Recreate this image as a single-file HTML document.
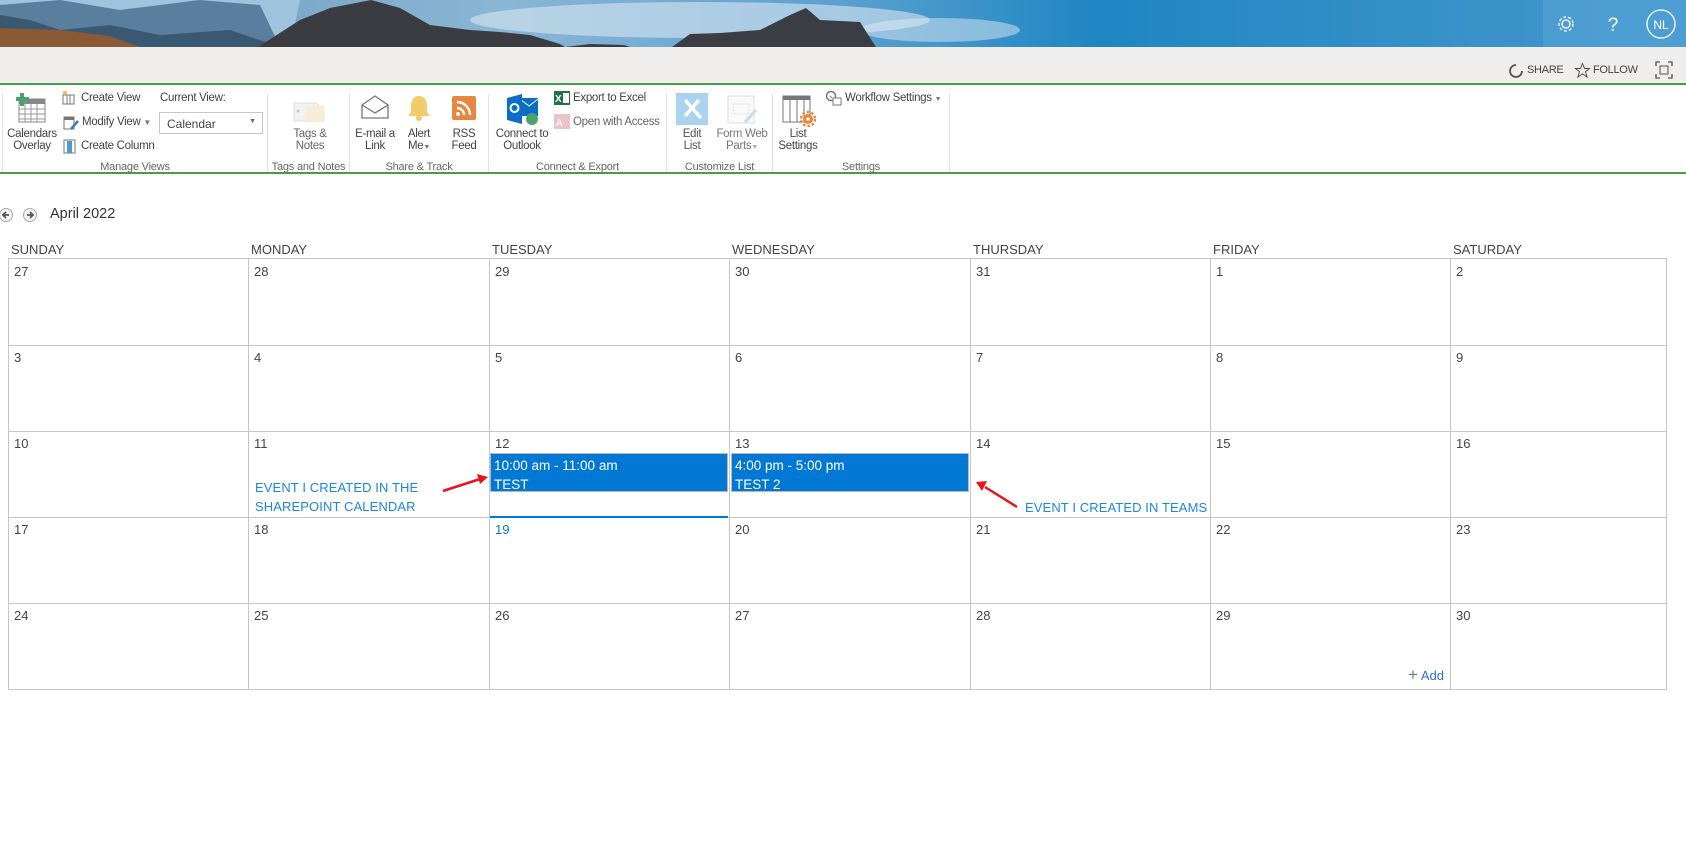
<!DOCTYPE html>
<html><head><meta charset="utf-8"><style>
*{margin:0;padding:0;box-sizing:border-box}
body{width:1686px;height:854px;background:#fff;font-family:"Liberation Sans",sans-serif;position:relative;overflow:hidden;color:#444}
.a{position:absolute;white-space:nowrap}
.rt{font-size:11.5px;color:#444;text-align:center;line-height:12px;letter-spacing:-0.3px}
.gl{font-size:11px;color:#666;text-align:center;letter-spacing:-0.2px}
.sm{font-size:11.5px;letter-spacing:-0.3px}
.sep{position:absolute;top:94px;width:1px;height:78px;background:#e1e1e1}
.vl{position:absolute;top:258px;width:1px;height:432px;background:#c6c6c6}
.hl{position:absolute;left:8px;width:1659px;height:1px;background:#c6c6c6}
.dh{position:absolute;top:242px;font-size:13px;color:#444}
.dn{position:absolute;font-size:13px;color:#444}
.ev{position:absolute;top:453px;height:39px;background:#0078d4;border:1px solid #b8b8b8;color:#fff;font-size:13.5px;padding:2px 0 0 3px;line-height:19px}
.an{position:absolute;font-size:13px;color:#1a86e8;letter-spacing:0.1px}
</style></head><body>
<svg class="a" style="left:0;top:0" width="1686" height="47" viewBox="0 0 1686 47">
<defs><linearGradient id="sky" x1="0" x2="1" y1="0" y2="0">
<stop offset="0" stop-color="#6c97b8"/><stop offset="0.3" stop-color="#8ab6d6"/><stop offset="0.5" stop-color="#5aa0d0"/><stop offset="0.65" stop-color="#1f86c3"/><stop offset="0.9" stop-color="#3c93c9"/><stop offset="1" stop-color="#4a9ad0"/></linearGradient></defs>
<rect width="1686" height="47" fill="url(#sky)"/>
<ellipse cx="700" cy="20" rx="230" ry="18" fill="#d8e6f0" opacity="0.6"/>
<ellipse cx="940" cy="30" rx="80" ry="12" fill="#dde9f2" opacity="0.5"/>
<polygon points="0,0 300,0 290,47 0,47" fill="#9fc3dc"/>
<polygon points="0,5 60,0 120,10 200,0 260,5 280,47 0,47" fill="#5a7f9e"/>
<polygon points="0,15 30,20 60,30 110,25 160,35 230,30 280,47 0,47" fill="#3b5873"/>
<polygon points="0,28 60,30 110,36 140,47 0,47" fill="#8a5a35"/>
<polygon points="258,47 300,20 330,8 371,0 400,8 430,25 470,30 500,32 530,35 560,44 565,47" fill="#3a3c42"/>
<polygon points="565,47 590,44 624,45 630,47" fill="#3a3c42"/>
<polygon points="672,47 690,34 720,33 760,30 790,15 806,8 820,20 860,22 876,47" fill="#3b3d44"/>
<rect x="1543" y="0" width="143" height="47" fill="#4f9fd4" opacity="0.85"/>
<g fill="none" stroke="#fff" stroke-width="1.3">
<circle cx="1566" cy="24" r="4"/><circle cx="1566" cy="24" r="7" stroke-dasharray="3 2"/>
<circle cx="1661" cy="24" r="14"/></g>
<text x="1613" y="31" fill="#fff" font-size="19" text-anchor="middle" font-family="Liberation Sans">?</text>
<text x="1661" y="29" fill="#fff" font-size="12" text-anchor="middle" font-family="Liberation Sans">NL</text>
</svg>
<div class="a" style="left:0;top:47px;width:1686px;height:37px;background:#efeeed"></div>
<svg class="a" style="left:1508px;top:63px" width="16" height="16"><path d="M8 2a6 6 0 1 0 6 6" fill="none" stroke="#555" stroke-width="1.8"/></svg>
<div class="a" style="left:1527px;top:64px;font-size:11px;color:#444;letter-spacing:-0.3px">SHARE</div>
<svg class="a" style="left:1574px;top:62px" width="17" height="17"><path d="M8.5 1.5l2 5h5l-4 3.2 1.6 5.3-4.6-3.2-4.6 3.2 1.6-5.3-4-3.2h5z" fill="none" stroke="#555" stroke-width="1"/></svg>
<div class="a" style="left:1593px;top:64px;font-size:11px;color:#444;letter-spacing:-0.3px">FOLLOW</div>
<svg class="a" style="left:1655px;top:61px" width="18" height="18"><path d="M1 5V1h4M13 1h4v4M17 13v4h-4M5 17H1v-4" fill="none" stroke="#555" stroke-width="1.3"/><rect x="5" y="5" width="8" height="8" fill="none" stroke="#555"/></svg>
<div class="a" style="left:0;top:83px;width:1686px;height:2px;background:#4a9a4a"></div>
<div class="a" style="left:0;top:172px;width:1686px;height:2px;background:#4a9a4a"></div>
<div class="sep" style="left:2px"></div>
<div class="sep" style="left:267px"></div><div class="sep" style="left:349px"></div><div class="sep" style="left:488px"></div><div class="sep" style="left:666px"></div><div class="sep" style="left:772px"></div><div class="sep" style="left:949px"></div>
<svg class="a" style="left:14px;top:93px" width="32" height="30"><rect x="5" y="6" width="26" height="23" fill="#fff" stroke="#888"/><rect x="5" y="6" width="26" height="5" fill="#888"/><g stroke="#999"><path d="M5 16h26M5 21h26M5 26h26M11 11v18M17 11v18M23 11v18"/></g><path d="M8 0v13M2 6h13" stroke="#4aa36a" stroke-width="4"/></svg>
<div class="a rt" style="left:4px;top:128px;width:56px">Calendars<br>Overlay</div>
<svg class="a" style="left:62px;top:91px" width="14" height="14"><rect x="1" y="4" width="11" height="9" fill="#fff" stroke="#777"/><path d="M5 4v9M8 4v9" stroke="#777"/><circle cx="3" cy="2" r="2" fill="#f5b942"/></svg>
<div class="a sm" style="left:81px;top:92px">Create View</div>
<svg class="a" style="left:63px;top:115px" width="16" height="16"><rect x="1" y="2" width="10" height="12" fill="#fff" stroke="#777"/><rect x="1" y="2" width="10" height="3" fill="#777"/><path d="M8 14l7-8" stroke="#3a7cc4" stroke-width="2.5"/></svg>
<div class="a sm" style="left:82px;top:116px">Modify View <span style="font-size:8px;color:#777">▼</span></div>
<svg class="a" style="left:63px;top:138px" width="14" height="16"><rect x="1" y="2" width="11" height="13" fill="#fff" stroke="#777"/><rect x="4" y="3" width="5" height="12" fill="#4a9ad6"/></svg>
<div class="a sm" style="left:81px;top:140px">Create Column</div>
<div class="a sm" style="left:160px;top:92px">Current View:</div>
<div class="a" style="left:159px;top:112px;width:104px;height:22px;border:1px solid #c8c8c8;font-size:12px;padding:4px 0 0 7px">Calendar<span style="position:absolute;right:6px;top:5px;font-size:7px;color:#666">▼</span></div>
<div class="a gl" style="left:60px;top:161px;width:150px">Manage Views</div>
<svg class="a" style="left:292px;top:97px" width="34" height="26"><path d="M2 6h22l8 8v10H2z" fill="#f1f1f1" stroke="#ddd"/><rect x="14" y="9" width="18" height="16" fill="#f8ecd6"/><circle cx="6" cy="14" r="1.5" fill="#ccc"/></svg>
<div class="a rt" style="left:285px;top:128px;width:50px;color:#666">Tags &amp;<br>Notes</div>
<div class="a gl" style="left:268px;top:161px;width:81px">Tags and Notes</div>
<svg class="a" style="left:361px;top:95px" width="28" height="24"><path d="M1 10L14 1l13 9v13H1z" fill="#fff" stroke="#777" stroke-width="1.3"/><path d="M1 10l13 8 13-8" fill="none" stroke="#777" stroke-width="1.3"/></svg>
<div class="a rt" style="left:350px;top:128px;width:50px">E-mail a<br>Link</div>
<svg class="a" style="left:406px;top:94px" width="26" height="28"><path d="M13 2c-6 0-8 5-8 10v6l-3 4h22l-3-4v-6c0-5-2-10-8-10z" fill="#f2cb6b"/><circle cx="13" cy="24" r="3" fill="#f2cb6b"/></svg>
<div class="a rt" style="left:400px;top:128px;width:38px">Alert<br>Me<span style="font-size:7px;color:#777">▼</span></div>
<svg class="a" style="left:452px;top:96px" width="24" height="24"><rect width="24" height="24" rx="2" fill="#e8873e"/><g fill="none" stroke="#fff" stroke-width="2.4"><path d="M5 12a7 7 0 0 1 7 7M5 6a13 13 0 0 1 13 13"/></g><circle cx="6" cy="18" r="2" fill="#fff"/></svg>
<div class="a rt" style="left:445px;top:128px;width:38px">RSS<br>Feed</div>
<div class="a gl" style="left:350px;top:161px;width:138px">Share &amp; Track</div>
<svg class="a" style="left:506px;top:93px" width="34" height="32"><path d="M14 5h18v18H14z" fill="#0a6ec7"/><path d="M14 6l9 7 9-7" fill="none" stroke="#fff"/><path d="M1 5l15-4v30L1 27z" fill="#0a6ec7"/><circle cx="8.5" cy="15" r="4" fill="none" stroke="#fff" stroke-width="2"/><circle cx="26" cy="26" r="6" fill="#4aa36a"/></svg>
<div class="a rt" style="left:492px;top:128px;width:60px">Connect to<br>Outlook</div>
<svg class="a" style="left:554px;top:91px" width="16" height="14"><rect width="16" height="14" fill="#1f7244"/><text x="1" y="11" font-size="10" fill="#fff" font-family="Liberation Sans" font-weight="bold">X</text><rect x="9" y="2" width="6" height="10" fill="#fff"/></svg>
<div class="a sm" style="left:573px;top:92px">Export to Excel</div>
<svg class="a" style="left:554px;top:114px" width="16" height="15"><rect width="16" height="15" fill="#e8c4c8"/><text x="2" y="12" font-size="10" fill="#fff" font-family="Liberation Sans">A</text></svg>
<div class="a sm" style="left:573px;top:116px;color:#666">Open with Access</div>
<div class="a gl" style="left:489px;top:161px;width:177px">Connect &amp; Export</div>
<svg class="a" style="left:676px;top:93px" width="32" height="32"><rect width="32" height="32" fill="#a9d3ee"/><path d="M9 7l16 18M23 7l-14 16" stroke="#fff" stroke-width="3.5"/></svg>
<div class="a rt" style="left:672px;top:128px;width:40px;color:#555">Edit<br>List</div>
<svg class="a" style="left:727px;top:95px" width="31" height="30"><rect x="1" y="1" width="26" height="27" fill="#fafafa" stroke="#ddd"/><rect x="6" y="9" width="16" height="10" fill="none" stroke="#ddd" stroke-dasharray="2 1"/><path d="M18 27l11-12" stroke="#c4dcee" stroke-width="3"/></svg>
<div class="a rt" style="left:712px;top:128px;width:60px;color:#777">Form Web<br>Parts<span style="font-size:7px;color:#aaa">▼</span></div>
<div class="a gl" style="left:667px;top:161px;width:105px">Customize List</div>
<svg class="a" style="left:782px;top:95px" width="34" height="32"><rect x="1" y="1" width="27" height="26" fill="#fff" stroke="#777"/><rect x="1" y="1" width="27" height="4" fill="#777"/><path d="M8 5v22M15 5v22M22 5v22" stroke="#777"/><circle cx="26" cy="24" r="5" fill="#e8873e"/><circle cx="26" cy="24" r="7" fill="none" stroke="#e8873e" stroke-width="2.5" stroke-dasharray="2.5 2"/><circle cx="26" cy="24" r="1.8" fill="#fff"/></svg>
<div class="a rt" style="left:772px;top:128px;width:52px">List<br>Settings</div>
<svg class="a" style="left:825px;top:90px" width="17" height="16"><circle cx="6" cy="6" r="4.5" fill="none" stroke="#777" stroke-width="1.5"/><path d="M5 6l2 2" stroke="#e8573e"/><rect x="8" y="8" width="8" height="7" fill="#fff" stroke="#777"/></svg>
<div class="a sm" style="left:845px;top:92px">Workflow Settings <span style="font-size:7px;color:#777">▼</span></div>
<div class="a gl" style="left:773px;top:161px;width:176px">Settings</div>
<svg class="a" style="left:0;top:207px" width="40" height="16"><circle cx="6" cy="8" r="6.5" fill="#f4f4f4" stroke="#aaa"/><path d="M9 8H3M6 5L3 8l3 3" stroke="#555" stroke-width="1.8" fill="none"/><circle cx="30" cy="8" r="6.5" fill="#f4f4f4" stroke="#aaa"/><path d="M27 8h6M30 5l3 3-3 3" stroke="#555" stroke-width="1.8" fill="none"/></svg>
<div class="a" style="left:50px;top:206px;font-size:14.5px;color:#333">April 2022</div>
<div class="dh" style="left:11px">SUNDAY</div><div class="dh" style="left:251px">MONDAY</div><div class="dh" style="left:492px">TUESDAY</div><div class="dh" style="left:732px">WEDNESDAY</div><div class="dh" style="left:973px">THURSDAY</div><div class="dh" style="left:1213px">FRIDAY</div><div class="dh" style="left:1453px">SATURDAY</div>
<div class="hl" style="top:258px"></div><div class="hl" style="top:345px"></div><div class="hl" style="top:431px"></div><div class="hl" style="top:517px"></div><div class="hl" style="top:603px"></div><div class="hl" style="top:689px"></div>
<div class="vl" style="left:8px"></div><div class="vl" style="left:248px"></div><div class="vl" style="left:489px"></div><div class="vl" style="left:729px"></div><div class="vl" style="left:970px"></div><div class="vl" style="left:1210px"></div><div class="vl" style="left:1450px"></div><div class="vl" style="left:1666px"></div>
<div class="a" style="left:490px;top:516px;width:238px;height:2px;background:#0078d4"></div>
<div class="dn" style="left:14px;top:264px">27</div><div class="dn" style="left:254px;top:264px">28</div><div class="dn" style="left:495px;top:264px">29</div><div class="dn" style="left:735px;top:264px">30</div><div class="dn" style="left:976px;top:264px">31</div><div class="dn" style="left:1216px;top:264px">1</div><div class="dn" style="left:1456px;top:264px">2</div>
<div class="dn" style="left:14px;top:350px">3</div><div class="dn" style="left:254px;top:350px">4</div><div class="dn" style="left:495px;top:350px">5</div><div class="dn" style="left:735px;top:350px">6</div><div class="dn" style="left:976px;top:350px">7</div><div class="dn" style="left:1216px;top:350px">8</div><div class="dn" style="left:1456px;top:350px">9</div>
<div class="dn" style="left:14px;top:436px">10</div><div class="dn" style="left:254px;top:436px">11</div><div class="dn" style="left:495px;top:436px">12</div><div class="dn" style="left:735px;top:436px">13</div><div class="dn" style="left:976px;top:436px">14</div><div class="dn" style="left:1216px;top:436px">15</div><div class="dn" style="left:1456px;top:436px">16</div>
<div class="dn" style="left:14px;top:522px">17</div><div class="dn" style="left:254px;top:522px">18</div><div class="dn" style="left:495px;top:522px;color:#0078d4">19</div><div class="dn" style="left:735px;top:522px">20</div><div class="dn" style="left:976px;top:522px">21</div><div class="dn" style="left:1216px;top:522px">22</div><div class="dn" style="left:1456px;top:522px">23</div>
<div class="dn" style="left:14px;top:608px">24</div><div class="dn" style="left:254px;top:608px">25</div><div class="dn" style="left:495px;top:608px">26</div><div class="dn" style="left:735px;top:608px">27</div><div class="dn" style="left:976px;top:608px">28</div><div class="dn" style="left:1216px;top:608px">29</div><div class="dn" style="left:1456px;top:608px">30</div>
<div class="a" style="left:1408px;top:668px;font-size:13px;color:#2a72c8"><span style="color:#777;font-size:17px;line-height:12px">+</span> Add</div>
<div class="ev" style="left:490px;width:238px">10:00 am - 11:00 am<br>TEST</div>
<div class="ev" style="left:731px;width:238px">4:00 pm - 5:00 pm<br>TEST 2</div>
<div class="an" style="left:255px;top:480px">EVENT I CREATED IN THE</div>
<div class="an" style="left:255px;top:499px">SHAREPOINT CALENDAR</div>
<div class="an" style="left:1025px;top:500px">EVENT I CREATED IN TEAMS</div>
<svg class="a" style="left:0;top:0" width="1686" height="854">
<path d="M443 491L480 479" stroke="#e8141a" stroke-width="2.5"/><path d="M488 477L477 474 480 484z" fill="#e8141a"/>
<path d="M1017 507L985 487" stroke="#e8141a" stroke-width="2.5"/><path d="M976 482L987 481 982 491z" fill="#e8141a"/>
</svg>
</body></html>
